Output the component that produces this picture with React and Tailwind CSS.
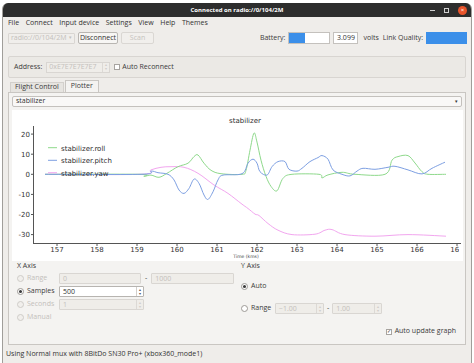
import React from "react";

// plot coordinates: real x minus plot left (11), value -> y
const toPt = ([x, v]) => [x - 11, 64.3 - 2.01 * v];

function smoothPath(pts) {
  const p = pts.map(toPt);
  let d = `M${p[0][0].toFixed(1)},${p[0][1].toFixed(1)}`;
  for (let i = 0; i < p.length - 1; i++) {
    const p0 = p[i - 1] || p[i];
    const p1 = p[i];
    const p2 = p[i + 1];
    const p3 = p[i + 2] || p2;
    const c1 = [p1[0] + (p2[0] - p0[0]) / 6, p1[1] + (p2[1] - p0[1]) / 6];
    const c2 = [p2[0] - (p3[0] - p1[0]) / 6, p2[1] - (p3[1] - p1[1]) / 6];
    d += ` C${c1[0].toFixed(1)},${c1[1].toFixed(1)} ${c2[0].toFixed(1)},${c2[1].toFixed(1)} ${p2[0].toFixed(1)},${p2[1].toFixed(1)}`;
  }
  return d;
}

const roll = [
  [44, 0], [138, 0], [143, -1], [150, -0.4], [158, -1.5], [166, 0.5], [177, 3.8],
  [187, 5.5], [193, 8.8], [197, 9.6], [203, 5.5], [210, 2], [220, 0.3], [241, 0],
  [245, 2], [249, 12], [253, 20.5], [256, 16], [260, 7], [265, -1], [270, -6],
  [276, -8.2], [282, -2], [291, 0], [318, 0], [321, -1.8], [327, -0.3], [341, 1],
  [354, 0], [384, 0], [391, 7], [397, 8.8], [407, 9.3], [414, 5.6], [421, 1.3],
  [427, 0], [445, 0],
];

const pitch = [
  [44, 0], [140, 0], [150, 1.6], [157, 0.8], [167, 0], [173, -2.8], [178, -7.8],
  [183, -9.5], [188, -7], [193, -2.4], [198, -4.5], [203, -10.3], [207, -12.5],
  [212, -8.7], [217, -2.8], [222, -0.4], [241, 0.3], [247, 5.5], [252, 7.5],
  [256, 5.5], [259, 1.3], [266, -0.4], [271, 3.8], [277, 6.3], [284, 6.3],
  [288, 2.5], [296, 1.6], [301, 3], [309, 6.3], [317, 8.3], [321, 9.3], [327, 7.5],
  [332, 2.2], [341, 0], [349, -0.8], [356, 1.6], [362, 3], [374, 2.5], [387, 3.5],
  [394, 4], [407, 2.2], [421, 0.2], [431, 3], [444, 6],
];

const yaw = [
  [44, 0], [140, 0], [150, 2.2], [160, 3.5], [170, 3.8], [183, 3.5], [197, 0.5],
  [213, -5.3], [227, -9.5], [240, -14.5], [247, -17], [254, -19.8], [258, -20.5],
  [267, -24.5], [277, -27.8], [291, -30], [314, -29.8], [324, -27.8], [331, -27.5],
  [344, -30], [374, -30.8], [407, -30], [445, -30.8],
];

function Radio({ on, disabled }) {
  return (
    <span
      className={`inline-flex items-center justify-center w-[7px] h-[7px] rounded-full border ${
        disabled ? "border-[#cfccc8] bg-[#f1efec]" : "border-[#9d9a96] bg-white"
      }`}
    >
      {on && <span className="w-[3px] h-[3px] rounded-full bg-[#3a3a3a]" />}
    </span>
  );
}

function Spin({ disabled }) {
  return (
    <span
      className={`flex flex-col items-center justify-center w-[7px] h-full border-l text-[4px] leading-[4px] ${
        disabled ? "border-[#dcd9d5] text-[#cfccc8]" : "border-[#d2cfcb] text-[#555]"
      }`}
    >
      <span>▴</span>
      <span>▾</span>
    </span>
  );
}

function Field({ w, value, disabled, spin }) {
  return (
    <span
      className={`flex items-center h-[11px] border rounded-[1px] ${w} ${
        disabled ? "border-[#d9d6d2] bg-[#efede9] text-[#c3c0bb]" : "border-[#b7b4b0] bg-white text-[#333]"
      }`}
    >
      <span className="flex-1 pl-[3px] leading-none">{value}</span>
      {spin && <Spin disabled={disabled} />}
    </span>
  );
}

function Plot() {
  const yTicks = [20, 10, 0, -10, -20, -30];
  const xTicks = [157, 158, 159, 160, 161, 162, 163, 164, 165, 166, 167];
  return (
    <svg width="451" height="151" className="block bg-white" style={{ fontFamily: "'DejaVu Sans', sans-serif" }}>
      <defs>
        <clipPath id="plotclip">
          <rect x="0" y="0" width="447" height="151" />
        </clipPath>
      </defs>
      <text x="233" y="12.5" fontSize="7" textAnchor="middle" fill="#2e2e2e">
        stabilizer
      </text>
      <line x1="21.5" y1="16" x2="21.5" y2="133.5" stroke="#555" strokeWidth="1" />
      <line x1="21" y1="133.5" x2="449" y2="133.5" stroke="#555" strokeWidth="1" />
      {yTicks.map((v) => {
        const y = 64.3 - 2.01 * v;
        return (
          <g key={v}>
            <line x1="19" y1={y} x2="21.5" y2={y} stroke="#555" />
            <text x="18" y={y + 2.5} fontSize="7" textAnchor="end" fill="#333">
              {v}
            </text>
          </g>
        );
      })}
      <g clipPath="url(#plotclip)">
        {xTicks.map((t) => {
          const x = 45 + 40 * (t - 157);
          return (
            <g key={t}>
              <line x1={x} y1="133.5" x2={x} y2="136" stroke="#555" />
              <text x={x} y="142" fontSize="7" textAnchor="middle" fill="#333">
                {t}
              </text>
            </g>
          );
        })}
      </g>
      <text x="234" y="148" fontSize="4.5" textAnchor="middle" fill="#444">
        Time (kms)
      </text>
      <path d={smoothPath(yaw)} fill="none" stroke="#f2a6ef" strokeWidth="1" />
      <path d={smoothPath(roll)} fill="none" stroke="#8ed98b" strokeWidth="1" />
      <path d={smoothPath(pitch)} fill="none" stroke="#7d9fe2" strokeWidth="1" />
      <line x1="36" y1="37.7" x2="45" y2="37.7" stroke="#8ed98b" />
      <line x1="36" y1="50.3" x2="45" y2="50.3" stroke="#7d9fe2" />
      <line x1="36" y1="62.7" x2="45" y2="62.7" stroke="#f2a6ef" />
      <text x="49" y="40.5" fontSize="7" fill="#2e2e2e">stabilizer.roll</text>
      <text x="49" y="53" fontSize="7" fill="#2e2e2e">stabilizer.pitch</text>
      <text x="49" y="65.5" fontSize="7" fill="#2e2e2e">stabilizer.yaw</text>
    </svg>
  );
}

export default function App() {
  return (
    <div className="w-[474px] h-[363px] bg-white pt-[3px] px-[2px] overflow-hidden font-['Open_Sans',sans-serif] text-[7px] text-[#3b3b3b]">
      <div className="h-full flex flex-col rounded-t-[6px] overflow-hidden bg-[#efedea] border-x border-[#a09e9a]">
        {/* title bar */}
        <div className="relative h-[14px] shrink-0 bg-[#2d2d2d] flex items-center justify-center">
          <span className="text-white font-bold text-[6px]">Connected on radio://0/104/2M</span>
          <div className="absolute right-[4px] top-0 h-full flex items-center gap-[9px]">
            <span className="w-[5px] h-px bg-[#cfcfcf]" />
            <span className="w-[5px] h-[5px] border border-[#cfcfcf]" />
            <span className="w-[9px] h-[9px] rounded-full bg-[#e9542b] flex items-center justify-center text-white text-[6px] leading-none">
              ×
            </span>
          </div>
        </div>

        {/* menu bar */}
        <div className="h-[13px] shrink-0 flex items-center gap-[6.6px] pl-[5px] text-[#333]">
          {["File", "Connect", "Input device", "Settings", "View", "Help", "Themes"].map((m) => (
            <span key={m}>{m}</span>
          ))}
        </div>

        {/* toolbar */}
        <div className="h-[16px] shrink-0 flex items-center pl-[5px] pr-[4px]">
          <span className="flex items-center justify-between w-[67px] h-[11px] border border-[#d9d6d2] rounded-[1px] bg-[#f0eeeb] px-[2px] text-[#c3c0bb]">
            <span>radio://0/104/2M</span>
            <span className="text-[5px]">▾</span>
          </span>
          <span className="ml-[3px] flex items-center justify-center w-[40px] h-[12px] border border-[#b9b6b2] rounded-[2px] bg-[#f7f6f4] text-[#333]">
            Disconnect
          </span>
          <span className="ml-[3px] flex items-center justify-center w-[33px] h-[12px] border border-[#dad7d3] rounded-[2px] bg-[#f1efec] text-[#c6c3be]">
            Scan
          </span>
          <span className="ml-auto mr-[3px]">Battery:</span>
          <span className="flex w-[42px] h-[12px] border border-[#c4c1bd] bg-white">
            <span className="w-[16px] h-full bg-[#3b8fe9]" />
          </span>
          <span className="ml-[3px] flex items-center justify-center w-[25px] h-[12px] border border-[#c4c1bd] bg-white text-[#333]">
            3.099
          </span>
          <span className="ml-[5px]">volts</span>
          <span className="ml-[4px] mr-[3px]">Link Quality:</span>
          <span className="w-[41px] h-[12px] bg-[#3b8fe9] border border-[#3b8fe9]" />
        </div>

        {/* address group */}
        <div className="mt-[10px] mx-[5px] h-[22px] shrink-0 flex items-center px-[5px] border border-[#d8d5d1] rounded-[2px] bg-[#ebe9e5]">
          <span>Address:</span>
          <span className="ml-[4px] flex items-center w-[64px] h-[11px] border border-[#d9d6d2] bg-[#efede9] text-[#c3c0bb]">
            <span className="flex-1 pl-[2px]">0xE7E7E7E7E7</span>
            <Spin disabled />
          </span>
          <span className="ml-[4px] w-[6px] h-[6px] border border-[#a7a4a0] bg-white" />
          <span className="ml-[2px]">Auto Reconnect</span>
        </div>

        {/* tabs */}
        <div className="mt-[2px] h-[12px] shrink-0 flex items-end pl-[7px]">
          <span className="h-[10px] flex items-center px-[4px] border border-b-0 border-[#d3d0cc] bg-[#e6e4e0]">
            Flight Control
          </span>
          <span className="h-[12px] ml-[1px] flex items-center px-[5px] border border-b-0 border-[#c9c6c2] bg-[#f4f3f1]">
            Plotter
          </span>
        </div>

        {/* tab pane */}
        <div className="mx-[5px] h-[253px] shrink-0 flex flex-col border border-[#c9c6c2] bg-[#f4f3f1] px-[3px] pt-[3px]">
          <div className="h-[11px] shrink-0 flex items-center justify-between border border-[#c4c1bd] rounded-[2px] bg-[#f9f8f7] px-[3px] text-[#333]">
            <span>stabilizer</span>
            <span className="text-[5px]">▾</span>
          </div>
          <div className="mt-[3px] shrink-0">
            <Plot />
          </div>

          {/* axis controls */}
          <div className="flex-1 flex">
            <div className="w-[229px] pl-[5px] flex flex-col">
              <div className="h-[11px] flex items-center">X Axis</div>
              <div className="h-[13px] flex items-center">
                <Radio disabled />
                <span className="ml-[3px] w-[32px] text-[#c3c0bb]">Range</span>
                <Field w="w-[82px]" value="0" disabled />
                <span className="mx-[4px]">-</span>
                <Field w="w-[83px]" value="1000" disabled />
              </div>
              <div className="h-[13px] flex items-center">
                <Radio on />
                <span className="ml-[3px] w-[32px]">Samples</span>
                <Field w="w-[85px]" value="500" spin />
              </div>
              <div className="h-[13px] flex items-center">
                <Radio disabled />
                <span className="ml-[3px] w-[32px] text-[#c3c0bb]">Seconds</span>
                <Field w="w-[85px]" value="1" spin disabled />
              </div>
              <div className="h-[13px] flex items-center">
                <Radio disabled />
                <span className="ml-[3px] text-[#c3c0bb]">Manual</span>
              </div>
            </div>
            <div className="flex-1 flex flex-col">
              <div className="h-[11px] flex items-center">Y Axis</div>
              <div className="mt-[8px] h-[13px] flex items-center">
                <Radio on />
                <span className="ml-[3px]">Auto</span>
              </div>
              <div className="mt-[9px] h-[13px] flex items-center">
                <Radio />
                <span className="ml-[3px] w-[24px]">Range</span>
                <Field w="w-[49px]" value="−1.00" spin disabled />
                <span className="mx-[3px]">-</span>
                <Field w="w-[50px]" value="1.00" spin disabled />
              </div>
              <div className="mt-[10px] h-[13px] flex items-center justify-end pr-[6px]">
                <span className="w-[6px] h-[6px] border border-[#a7a4a0] bg-white flex items-center justify-center text-[5px] leading-none text-[#333]">
                  ✓
                </span>
                <span className="ml-[3px]">Auto update graph</span>
              </div>
            </div>
          </div>
        </div>

        {/* status bar */}
        <div className="flex-1 flex items-center pl-[3px] text-[#333]">
          Using Normal mux with 8BitDo SN30 Pro+ (xbox360_mode1)
        </div>
      </div>
    </div>
  );
}
